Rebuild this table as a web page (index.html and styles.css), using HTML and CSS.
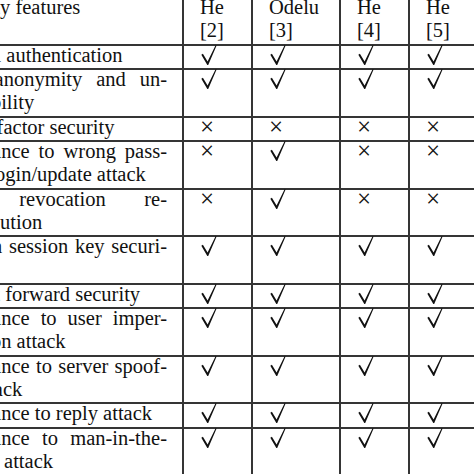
FILE: index.html
```html
<!DOCTYPE html>
<html>
<head>
<meta charset="utf-8">
<link rel="stylesheet" href="styles.css">
</head>
<body>
<div class="tbl">
  <div class="c f h"><div class="t">Security features</div></div>
  <div class="c h"><div class="t">He [2]</div></div>
  <div class="c h"><div class="t">Odelu [3]</div></div>
  <div class="c h"><div class="t">He [4]</div></div>
  <div class="c h"><div class="t">He [5]</div></div>

  <div class="c f"><div class="t">Mutual authentication</div></div>
  <div class="c"><div class="t"><svg class="ck" viewBox="0 0 16 20"><path d="M0.3 9.8 L1.9 8.7 L6.6 16.4 L14.7 0 L15.6 0.5 L7.2 20 L6.3 20 Z"/></svg></div></div>
  <div class="c"><div class="t"><svg class="ck" viewBox="0 0 16 20"><path d="M0.3 9.8 L1.9 8.7 L6.6 16.4 L14.7 0 L15.6 0.5 L7.2 20 L6.3 20 Z"/></svg></div></div>
  <div class="c"><div class="t"><svg class="ck" viewBox="0 0 16 20"><path d="M0.3 9.8 L1.9 8.7 L6.6 16.4 L14.7 0 L15.6 0.5 L7.2 20 L6.3 20 Z"/></svg></div></div>
  <div class="c"><div class="t"><svg class="ck" viewBox="0 0 16 20"><path d="M0.3 9.8 L1.9 8.7 L6.6 16.4 L14.7 0 L15.6 0.5 L7.2 20 L6.3 20 Z"/></svg></div></div>

  <div class="c f"><div class="t"><span class="j">User anonymity and un-</span>traceability</div></div>
  <div class="c"><div class="t"><svg class="ck" viewBox="0 0 16 20"><path d="M0.3 9.8 L1.9 8.7 L6.6 16.4 L14.7 0 L15.6 0.5 L7.2 20 L6.3 20 Z"/></svg></div></div>
  <div class="c"><div class="t"><svg class="ck" viewBox="0 0 16 20"><path d="M0.3 9.8 L1.9 8.7 L6.6 16.4 L14.7 0 L15.6 0.5 L7.2 20 L6.3 20 Z"/></svg></div></div>
  <div class="c"><div class="t"><svg class="ck" viewBox="0 0 16 20"><path d="M0.3 9.8 L1.9 8.7 L6.6 16.4 L14.7 0 L15.6 0.5 L7.2 20 L6.3 20 Z"/></svg></div></div>
  <div class="c"><div class="t"><svg class="ck" viewBox="0 0 16 20"><path d="M0.3 9.8 L1.9 8.7 L6.6 16.4 L14.7 0 L15.6 0.5 L7.2 20 L6.3 20 Z"/></svg></div></div>

  <div class="c f"><div class="t">Three-factor security</div></div>
  <div class="c"><div class="t"><span class="x">×</span></div></div>
  <div class="c"><div class="t"><span class="x">×</span></div></div>
  <div class="c"><div class="t"><span class="x">×</span></div></div>
  <div class="c"><div class="t"><span class="x">×</span></div></div>

  <div class="c f"><div class="t"><span class="j">Resistance to wrong pass-</span>word login/update attack</div></div>
  <div class="c"><div class="t"><span class="x">×</span></div></div>
  <div class="c"><div class="t"><svg class="ck" viewBox="0 0 16 20"><path d="M0.3 9.8 L1.9 8.7 L6.6 16.4 L14.7 0 L15.6 0.5 L7.2 20 L6.3 20 Z"/></svg></div></div>
  <div class="c"><div class="t"><span class="x">×</span></div></div>
  <div class="c"><div class="t"><span class="x">×</span></div></div>

  <div class="c f"><div class="t"><span class="j">User revocation re-</span>contribution</div></div>
  <div class="c"><div class="t"><span class="x">×</span></div></div>
  <div class="c"><div class="t"><svg class="ck" viewBox="0 0 16 20"><path d="M0.3 9.8 L1.9 8.7 L6.6 16.4 L14.7 0 L15.6 0.5 L7.2 20 L6.3 20 Z"/></svg></div></div>
  <div class="c"><div class="t"><span class="x">×</span></div></div>
  <div class="c"><div class="t"><span class="x">×</span></div></div>

  <div class="c f"><div class="t"><span class="j">Known session key securi-</span>ty</div></div>
  <div class="c"><div class="t"><svg class="ck" viewBox="0 0 16 20"><path d="M0.3 9.8 L1.9 8.7 L6.6 16.4 L14.7 0 L15.6 0.5 L7.2 20 L6.3 20 Z"/></svg></div></div>
  <div class="c"><div class="t"><svg class="ck" viewBox="0 0 16 20"><path d="M0.3 9.8 L1.9 8.7 L6.6 16.4 L14.7 0 L15.6 0.5 L7.2 20 L6.3 20 Z"/></svg></div></div>
  <div class="c"><div class="t"><svg class="ck" viewBox="0 0 16 20"><path d="M0.3 9.8 L1.9 8.7 L6.6 16.4 L14.7 0 L15.6 0.5 L7.2 20 L6.3 20 Z"/></svg></div></div>
  <div class="c"><div class="t"><svg class="ck" viewBox="0 0 16 20"><path d="M0.3 9.8 L1.9 8.7 L6.6 16.4 L14.7 0 L15.6 0.5 L7.2 20 L6.3 20 Z"/></svg></div></div>

  <div class="c f"><div class="t">Perfect forward security</div></div>
  <div class="c"><div class="t"><svg class="ck" viewBox="0 0 16 20"><path d="M0.3 9.8 L1.9 8.7 L6.6 16.4 L14.7 0 L15.6 0.5 L7.2 20 L6.3 20 Z"/></svg></div></div>
  <div class="c"><div class="t"><svg class="ck" viewBox="0 0 16 20"><path d="M0.3 9.8 L1.9 8.7 L6.6 16.4 L14.7 0 L15.6 0.5 L7.2 20 L6.3 20 Z"/></svg></div></div>
  <div class="c"><div class="t"><svg class="ck" viewBox="0 0 16 20"><path d="M0.3 9.8 L1.9 8.7 L6.6 16.4 L14.7 0 L15.6 0.5 L7.2 20 L6.3 20 Z"/></svg></div></div>
  <div class="c"><div class="t"><svg class="ck" viewBox="0 0 16 20"><path d="M0.3 9.8 L1.9 8.7 L6.6 16.4 L14.7 0 L15.6 0.5 L7.2 20 L6.3 20 Z"/></svg></div></div>

  <div class="c f"><div class="t"><span class="j">Resistance to user imper-</span>sonation attack</div></div>
  <div class="c"><div class="t"><svg class="ck" viewBox="0 0 16 20"><path d="M0.3 9.8 L1.9 8.7 L6.6 16.4 L14.7 0 L15.6 0.5 L7.2 20 L6.3 20 Z"/></svg></div></div>
  <div class="c"><div class="t"><svg class="ck" viewBox="0 0 16 20"><path d="M0.3 9.8 L1.9 8.7 L6.6 16.4 L14.7 0 L15.6 0.5 L7.2 20 L6.3 20 Z"/></svg></div></div>
  <div class="c"><div class="t"><svg class="ck" viewBox="0 0 16 20"><path d="M0.3 9.8 L1.9 8.7 L6.6 16.4 L14.7 0 L15.6 0.5 L7.2 20 L6.3 20 Z"/></svg></div></div>
  <div class="c"><div class="t"><svg class="ck" viewBox="0 0 16 20"><path d="M0.3 9.8 L1.9 8.7 L6.6 16.4 L14.7 0 L15.6 0.5 L7.2 20 L6.3 20 Z"/></svg></div></div>

  <div class="c f"><div class="t"><span class="j">Resistance to server spoof-</span>ing attack</div></div>
  <div class="c"><div class="t"><svg class="ck" viewBox="0 0 16 20"><path d="M0.3 9.8 L1.9 8.7 L6.6 16.4 L14.7 0 L15.6 0.5 L7.2 20 L6.3 20 Z"/></svg></div></div>
  <div class="c"><div class="t"><svg class="ck" viewBox="0 0 16 20"><path d="M0.3 9.8 L1.9 8.7 L6.6 16.4 L14.7 0 L15.6 0.5 L7.2 20 L6.3 20 Z"/></svg></div></div>
  <div class="c"><div class="t"><svg class="ck" viewBox="0 0 16 20"><path d="M0.3 9.8 L1.9 8.7 L6.6 16.4 L14.7 0 L15.6 0.5 L7.2 20 L6.3 20 Z"/></svg></div></div>
  <div class="c"><div class="t"><svg class="ck" viewBox="0 0 16 20"><path d="M0.3 9.8 L1.9 8.7 L6.6 16.4 L14.7 0 L15.6 0.5 L7.2 20 L6.3 20 Z"/></svg></div></div>

  <div class="c f"><div class="t">Resistance to reply attack</div></div>
  <div class="c"><div class="t"><svg class="ck" viewBox="0 0 16 20"><path d="M0.3 9.8 L1.9 8.7 L6.6 16.4 L14.7 0 L15.6 0.5 L7.2 20 L6.3 20 Z"/></svg></div></div>
  <div class="c"><div class="t"><svg class="ck" viewBox="0 0 16 20"><path d="M0.3 9.8 L1.9 8.7 L6.6 16.4 L14.7 0 L15.6 0.5 L7.2 20 L6.3 20 Z"/></svg></div></div>
  <div class="c"><div class="t"><svg class="ck" viewBox="0 0 16 20"><path d="M0.3 9.8 L1.9 8.7 L6.6 16.4 L14.7 0 L15.6 0.5 L7.2 20 L6.3 20 Z"/></svg></div></div>
  <div class="c"><div class="t"><svg class="ck" viewBox="0 0 16 20"><path d="M0.3 9.8 L1.9 8.7 L6.6 16.4 L14.7 0 L15.6 0.5 L7.2 20 L6.3 20 Z"/></svg></div></div>

  <div class="c f"><div class="t"><span class="j">Resistance to man-in-the-</span>middle attack</div></div>
  <div class="c"><div class="t"><svg class="ck" viewBox="0 0 16 20"><path d="M0.3 9.8 L1.9 8.7 L6.6 16.4 L14.7 0 L15.6 0.5 L7.2 20 L6.3 20 Z"/></svg></div></div>
  <div class="c"><div class="t"><svg class="ck" viewBox="0 0 16 20"><path d="M0.3 9.8 L1.9 8.7 L6.6 16.4 L14.7 0 L15.6 0.5 L7.2 20 L6.3 20 Z"/></svg></div></div>
  <div class="c"><div class="t"><svg class="ck" viewBox="0 0 16 20"><path d="M0.3 9.8 L1.9 8.7 L6.6 16.4 L14.7 0 L15.6 0.5 L7.2 20 L6.3 20 Z"/></svg></div></div>
  <div class="c"><div class="t"><svg class="ck" viewBox="0 0 16 20"><path d="M0.3 9.8 L1.9 8.7 L6.6 16.4 L14.7 0 L15.6 0.5 L7.2 20 L6.3 20 Z"/></svg></div></div>
</div>
</body>
</html>
```

FILE: styles.css
```css
html, body {
  margin: 0;
  padding: 0;
  background: #ffffff;
  overflow: hidden;
}

body {
  font-family: "Liberation Serif", "Times New Roman", serif;
  font-size: 20.5px;
  color: #111111;
}

.tbl {
  display: grid;
  grid-template-columns: 256px 67px 86px 67px 67px;
  gap: 2px;
  width: max-content;
  background: #353535;
  margin: -2.4px 0 0 -74px;
  padding: 0 2px 2px 0;
}

.c {
  background: #ffffff;
  padding: 0 4px 0 16px;
}

.c.f {
  padding-right: 15px;
}

.t {
  line-height: 23px;
  margin-top: -2px;
  padding-bottom: 1.5px;
}

.h .t {
  padding-bottom: 2px;
}

.j {
  display: block;
  text-align: justify;
  text-align-last: justify;
}

.ck {
  display: inline-block;
  width: 16px;
  height: 20px;
  margin-left: 1px;
  vertical-align: -3px;
  fill: #111111;
}

.x {
  display: inline-block;
  font-family: "Liberation Serif", "Times New Roman", serif;
  font-size: 25px;
  line-height: 18px;
  height: 18px;
  vertical-align: -1px;
}
```
